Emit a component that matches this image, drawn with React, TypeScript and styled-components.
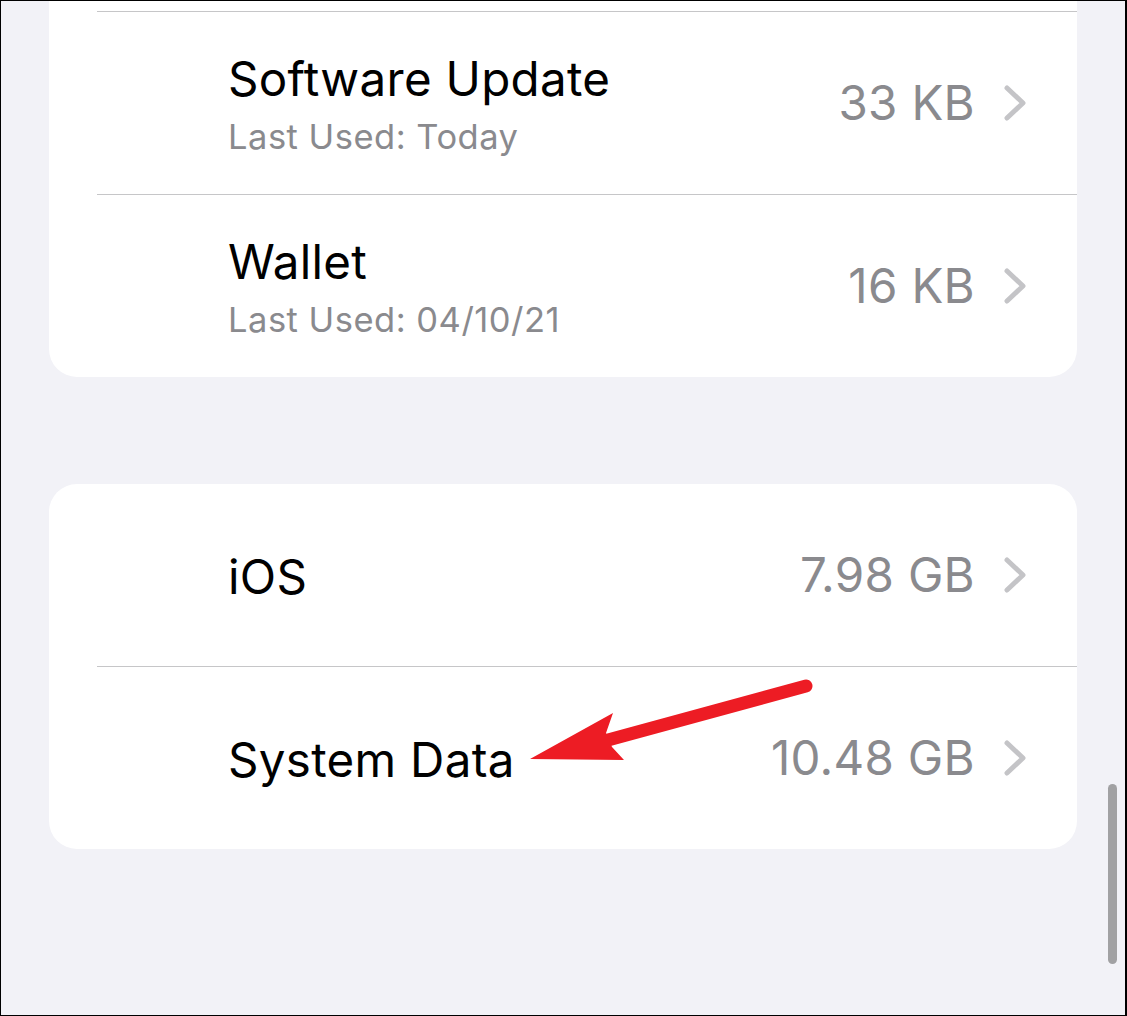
import React from "react";
import styled, { createGlobalStyle } from "styled-components";

const GlobalStyle = createGlobalStyle`
  html, body {
    margin: 0;
    padding: 0;
    background: #f2f2f7;
  }
  * { box-sizing: border-box; }
`;

const Screen = styled.div`
  position: relative;
  width: 1127px;
  height: 1016px;
  overflow: hidden;
  background: #f2f2f7;
  border-style: solid;
  border-color: #000;
  border-width: 1px 2px 1px 1px;
  padding: 0 48px;
  display: flex;
  flex-direction: column;
  gap: 107px;
  font-family: Inter, "Open Sans", "Liberation Sans", sans-serif;
  -webkit-font-smoothing: antialiased;
`;

const Card = styled.section<{ $clipTop?: boolean }>`
  background: #ffffff;
  border-radius: ${(p) => (p.$clipTop ? "0 0 28px 28px" : "28px")};
  padding-top: ${(p) => (p.$clipTop ? "10px" : "0")};
  display: flex;
  flex-direction: column;
`;

const Row = styled.div<{ $divider?: boolean }>`
  margin-left: 48px;
  height: ${(p) => (p.$divider ? "183px" : "182px")};
  border-top: ${(p) => (p.$divider ? "1px solid #c6c6c8" : "none")};
  padding: 0 50px 0 131px;
  display: flex;
  align-items: center;
  justify-content: space-between;
`;

const Labels = styled.div`
  display: flex;
  flex-direction: column;
  gap: 9px;
  padding-top: 3px;
`;

const Title = styled.div`
  font-size: 47.5px;
  line-height: 56px;
  color: #000;
  letter-spacing: 0.3px;
`;

const Subtitle = styled.div`
  font-size: 34.5px;
  line-height: 42px;
  color: #8a8a8e;
  letter-spacing: 0.5px;
`;

const Trailing = styled.div`
  display: flex;
  align-items: center;
  gap: 28px;
`;

const Value = styled.div`
  font-size: 47.5px;
  line-height: 56px;
  color: #8a8a8e;
  letter-spacing: 0.3px;
`;

const Chevron = () => (
  <svg width="24" height="38" viewBox="0 0 24 38" aria-hidden>
    <polyline
      points="4,4 20,19 4,34"
      fill="none"
      stroke="#c4c4c7"
      strokeWidth="5"
      strokeLinecap="round"
      strokeLinejoin="round"
    />
  </svg>
);

const ScrollThumb = styled.div`
  position: absolute;
  left: 1107px;
  top: 783px;
  width: 9px;
  height: 180px;
  border-radius: 5px;
  background: #a1a1a3;
`;

const Overlay = styled.svg`
  position: absolute;
  left: -1px;
  top: -1px;
  pointer-events: none;
`;

type Item = { name: string; detail?: string; size: string };

const appRows: Item[] = [
  { name: "Software Update", detail: "Last Used: Today", size: "33 KB" },
  { name: "Wallet", detail: "Last Used: 04/10/21", size: "16 KB" },
];

const systemRows: Item[] = [
  { name: "iOS", size: "7.98 GB" },
  { name: "System Data", size: "10.48 GB" },
];

const StorageRow = ({ item, divider }: { item: Item; divider: boolean }) => (
  <Row $divider={divider}>
    <Labels>
      <Title>{item.name}</Title>
      {item.detail && <Subtitle>{item.detail}</Subtitle>}
    </Labels>
    <Trailing>
      <Value>{item.size}</Value>
      <Chevron />
    </Trailing>
  </Row>
);

export default function App() {
  return (
    <>
      <GlobalStyle />
      <Screen>
        <Card $clipTop>
          {appRows.map((item) => (
            <StorageRow key={item.name} item={item} divider />
          ))}
        </Card>
        <Card>
          {systemRows.map((item, i) => (
            <StorageRow key={item.name} item={item} divider={i > 0} />
          ))}
        </Card>
        <ScrollThumb />
        {/* red callout pointing at the System Data row */}
        <Overlay width="1127" height="1016" viewBox="0 0 1127 1016">
          <line
            x1="608"
            y1="740"
            x2="806"
            y2="686"
            stroke="#ed1c24"
            strokeWidth="13"
            strokeLinecap="round"
          />
          <polygon
            points="530,759 613,713 606,733 612,747 624,760"
            fill="#ed1c24"
          />
        </Overlay>
      </Screen>
    </>
  );
}
